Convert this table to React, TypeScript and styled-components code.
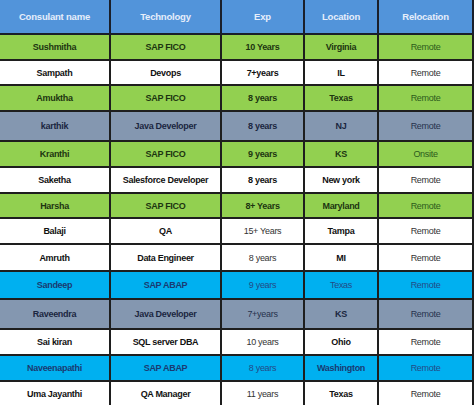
import React from "react";
import styled, { createGlobalStyle } from "styled-components";

const GlobalStyle = createGlobalStyle`
  html, body {
    margin: 0;
    padding: 0;
    background: #ffffff;
    font-family: "Liberation Sans", Arial, sans-serif;
  }
  * {
    box-sizing: border-box;
  }
`;

type Tone = "green" | "white" | "slate" | "sky";

const palette: Record<Tone, { bg: string; strong: string; soft: string }> = {
  green: { bg: "#92d050", strong: "#1d3510", soft: "#2c5a1c" },
  white: { bg: "#ffffff", strong: "#111111", soft: "#333333" },
  slate: { bg: "#8497b0", strong: "#1b2640", soft: "#26324d" },
  sky: { bg: "#00b0f0", strong: "#1a3a72", soft: "#234a86" },
};

const Sheet = styled.div`
  width: 474px;
  height: 405px;
  overflow: hidden;
  display: flex;
  flex-direction: column;
`;

const columns = "111px 111px 83px 74px 95px";

const HeaderRow = styled.div`
  display: grid;
  grid-template-columns: ${columns};
  height: 35px;
  background: #5294da;
  border-bottom: 2px solid #1a1f2a;
  flex-shrink: 0;
`;

const HeaderCell = styled.div`
  display: flex;
  align-items: center;
  justify-content: center;
  border-right: 2px solid #1a1f2a;
  color: #e6eefa;
  font-weight: bold;
  font-size: 9.5px;
  letter-spacing: -0.2px;
`;

const Row = styled.div<{ $tone: Tone; $h: number }>`
  display: grid;
  grid-template-columns: ${columns};
  height: ${(p) => p.$h}px;
  background: ${(p) => palette[p.$tone].bg};
  border-bottom: 2px solid #1e1e1e;
  flex-shrink: 0;
`;

const Cell = styled.div<{ $tone: Tone; $bold?: boolean }>`
  display: flex;
  align-items: center;
  justify-content: center;
  border-right: 2px solid #1e1e1e;
  font-size: 9px;
  letter-spacing: -0.3px;
  white-space: nowrap;
  font-weight: ${(p) => (p.$bold ? "bold" : "normal")};
  color: ${(p) => (p.$bold ? palette[p.$tone].strong : palette[p.$tone].soft)};
`;

type Person = {
  name: string;
  tech: string;
  exp: string;
  loc: string;
  reloc: string;
  tone: Tone;
  h: number;
  expBold: boolean;
  locBold: boolean;
};

const people: Person[] = [
  { name: "Sushmitha", tech: "SAP FICO", exp: "10 Years", loc: "Virginia", reloc: "Remote", tone: "green", h: 26, expBold: true, locBold: true },
  { name: "Sampath", tech: "Devops", exp: "7+years", loc: "IL", reloc: "Remote", tone: "white", h: 25, expBold: true, locBold: true },
  { name: "Amuktha", tech: "SAP FICO", exp: "8 years", loc: "Texas", reloc: "Remote", tone: "green", h: 26, expBold: true, locBold: true },
  { name: "karthik", tech: "Java Developer", exp: "8 years", loc: "NJ", reloc: "Remote", tone: "slate", h: 30, expBold: true, locBold: true },
  { name: "Kranthi", tech: "SAP FICO", exp: "9 years", loc: "KS", reloc: "Onsite", tone: "green", h: 26, expBold: true, locBold: true },
  { name: "Saketha", tech: "Salesforce Developer", exp: "8 years", loc: "New york", reloc: "Remote", tone: "white", h: 26, expBold: true, locBold: true },
  { name: "Harsha", tech: "SAP FICO", exp: "8+ Years", loc: "Maryland", reloc: "Remote", tone: "green", h: 25, expBold: true, locBold: true },
  { name: "Balaji", tech: "QA", exp: "15+ Years", loc: "Tampa", reloc: "Remote", tone: "white", h: 26, expBold: false, locBold: true },
  { name: "Amruth", tech: "Data Engineer", exp: "8 years", loc: "MI", reloc: "Remote", tone: "white", h: 27, expBold: false, locBold: true },
  { name: "Sandeep", tech: "SAP ABAP", exp: "9 years", loc: "Texas", reloc: "Remote", tone: "sky", h: 28, expBold: false, locBold: false },
  { name: "Raveendra", tech: "Java Developer", exp: "7+years", loc: "KS", reloc: "Remote", tone: "slate", h: 30, expBold: false, locBold: true },
  { name: "Sai kiran", tech: "SQL server DBA", exp: "10 years", loc: "Ohio", reloc: "Remote", tone: "white", h: 26, expBold: false, locBold: true },
  { name: "Naveenapathi", tech: "SAP ABAP", exp: "8 years", loc: "Washington", reloc: "Remote", tone: "sky", h: 26, expBold: false, locBold: true },
  { name: "Uma Jayanthi", tech: "QA Manager", exp: "11 years", loc: "Texas", reloc: "Remote", tone: "white", h: 26, expBold: false, locBold: true },
];

const headings = ["Consulant name", "Technology", "Exp", "Location", "Relocation"];

export default function App() {
  return (
    <>
      <GlobalStyle />
      <Sheet>
        <HeaderRow>
          {headings.map((h) => (
            <HeaderCell key={h}>{h}</HeaderCell>
          ))}
        </HeaderRow>
        {people.map((p) => (
          <Row key={p.name} $tone={p.tone} $h={p.h}>
            <Cell $tone={p.tone} $bold>{p.name}</Cell>
            <Cell $tone={p.tone} $bold>{p.tech}</Cell>
            <Cell $tone={p.tone} $bold={p.expBold}>{p.exp}</Cell>
            <Cell $tone={p.tone} $bold={p.locBold}>{p.loc}</Cell>
            <Cell $tone={p.tone}>{p.reloc}</Cell>
          </Row>
        ))}
      </Sheet>
    </>
  );
}
